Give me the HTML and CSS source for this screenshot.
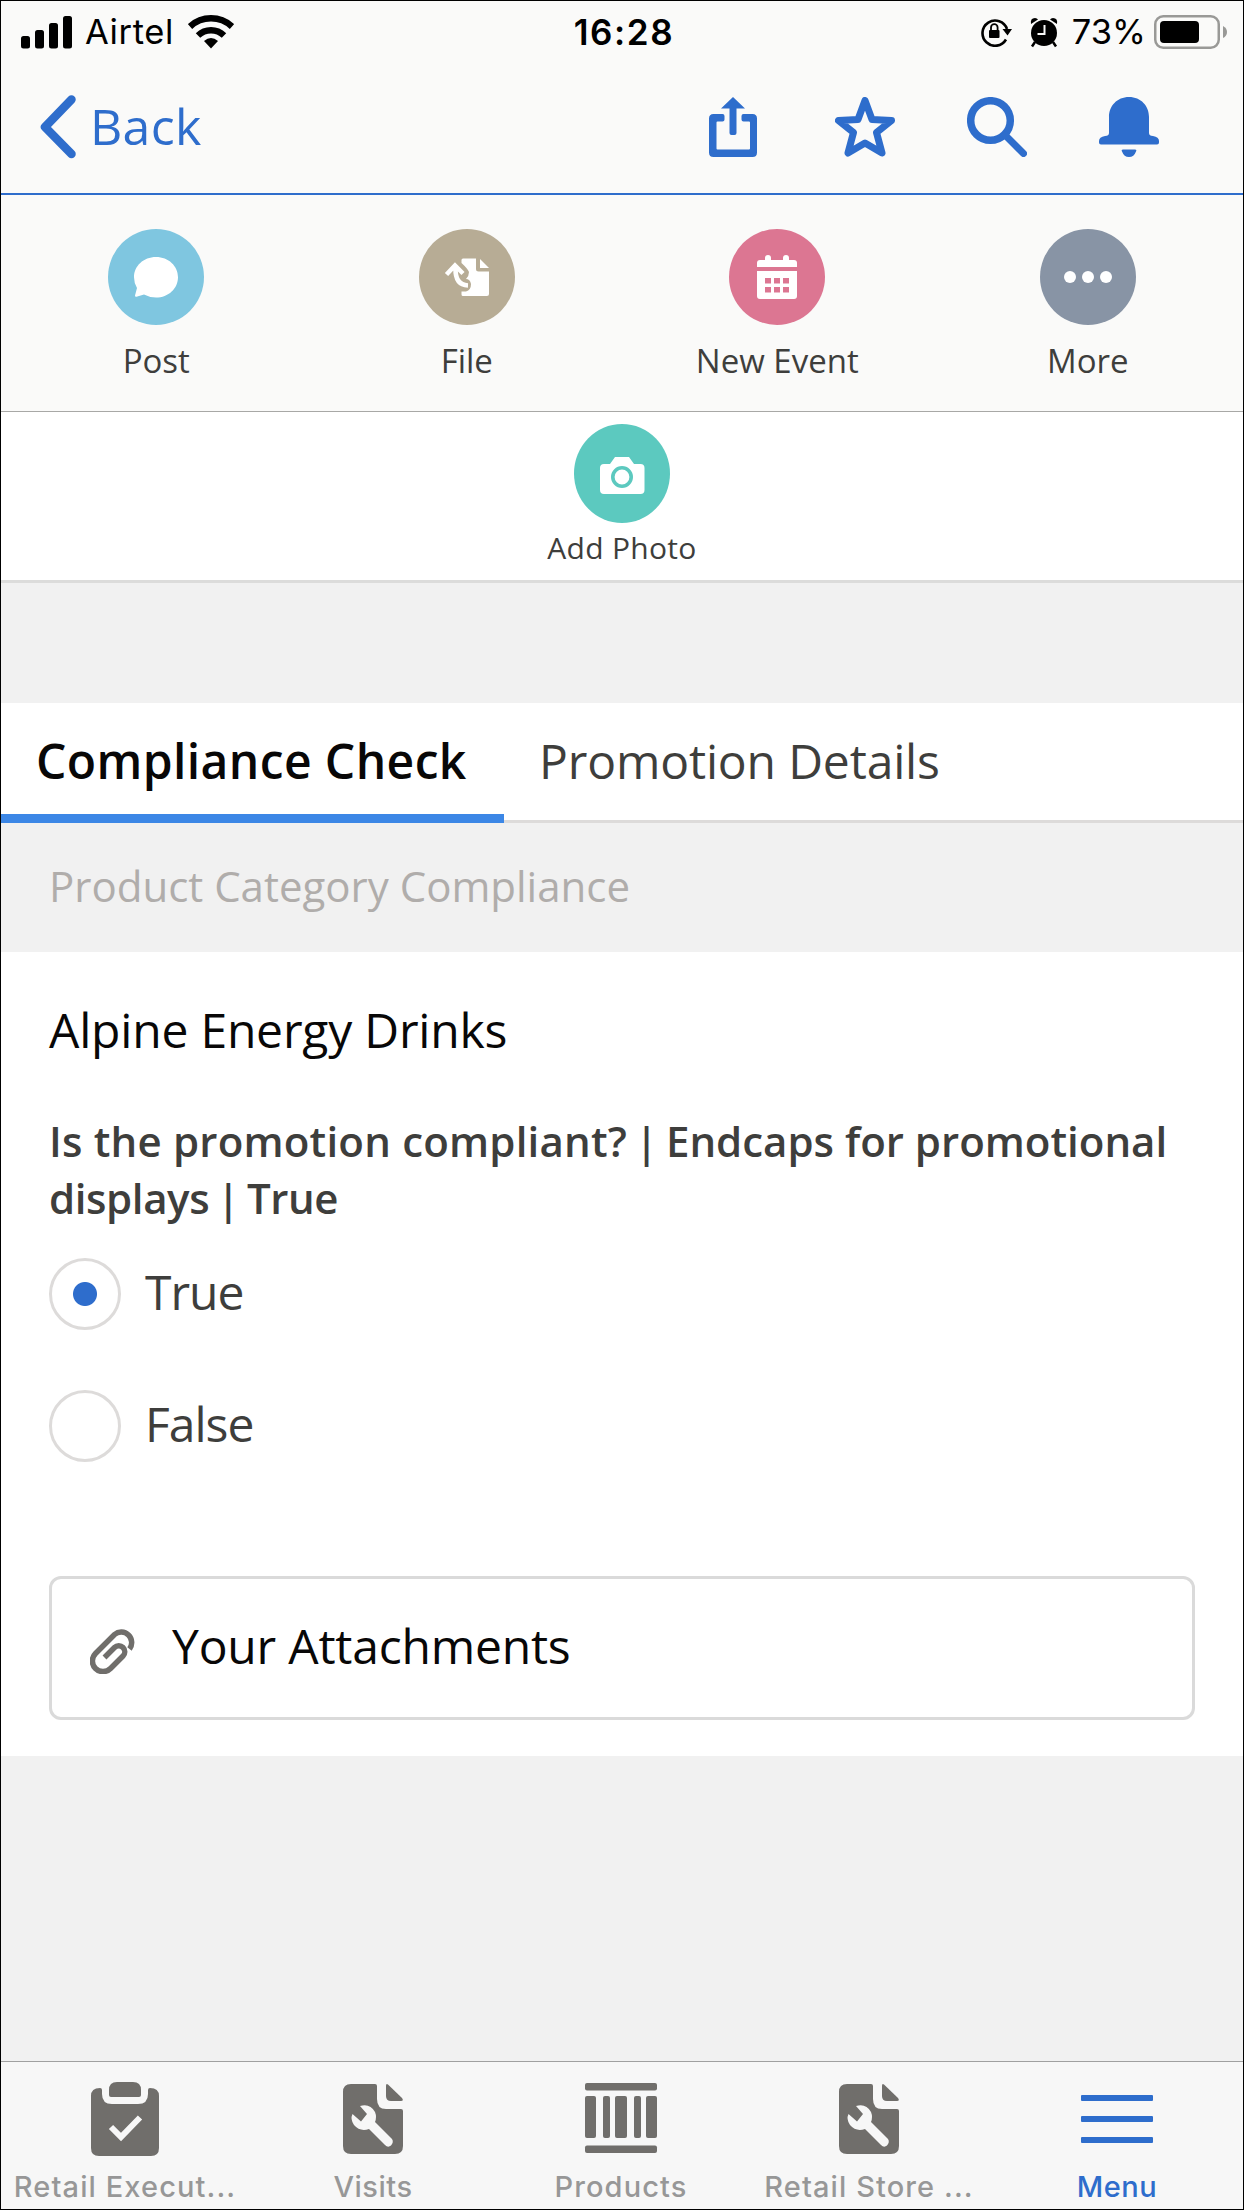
FILE: index.html
```html
<!DOCTYPE html>
<html lang="en">
<head>
    <meta charset="UTF-8">
    <meta name="viewport" content="width=device-width, initial-scale=1.0">
    <title>Compliance Check</title>
    <link rel="stylesheet" href="styles.css">
</head>
<body>
<div class="phone">
    <div class="status">
        <div class="status-left">
            <svg class="signal" width="51" height="33" viewBox="0 0 51 33">
                <rect x="0" y="20" width="9" height="12.5" rx="2.5"/>
                <rect x="14" y="14" width="9" height="18.5" rx="2.5"/>
                <rect x="28" y="7" width="9" height="25.5" rx="2.5"/>
                <rect x="42" y="0" width="9" height="32.5" rx="2.5"/>
            </svg>
            <span class="carrier">Airtel</span>
            <svg class="wifi" width="46" height="34" viewBox="0 0 46 34">
                <path d="M2 11.500A31 31 0 0 1 44 11.500" fill="none" stroke="#000" stroke-width="6.500"/>
                <path d="M10 20.500A19 19 0 0 1 36 20.500" fill="none" stroke="#000" stroke-width="6.500"/>
                <path d="M16 26Q23 20 30 26L23 33.500Z"/>
            </svg>
        </div>
        <span class="time">16:28</span>
        <div class="status-right">
            <svg class="lock" width="33" height="30" viewBox="0 0 33 30">
                <path d="M26 22.500A12.600 12.600 0 1 1 27 12" fill="none" stroke="#000" stroke-width="2.600"/>
                <path d="M22.500 12H32L27.500 18.500Z"/>
                <rect x="9" y="13" width="10.500" height="8" rx="1"/>
                <path d="M11 14V10.500a3.300 3.300 0 0 1 6.600 0V14" fill="none" stroke="#000" stroke-width="1.800"/>
            </svg>
            <svg class="alarm" width="28" height="31" viewBox="0 0 28 31">
                <circle cx="14" cy="16" r="13"/>
                <path d="M1 7Q0 1 5 1Q7 1 8 2.500ZM27 7Q28 1 23 1Q21 1 20 2.500Z"/>
                <path d="M5 25L2 29.500M23 25L26 29.500" stroke="#000" stroke-width="2.500"/>
                <path d="M14.500 8V17H7.500" fill="none" stroke="#fafaf9" stroke-width="2"/>
            </svg>
            <span class="percent">73%</span>
            <svg class="battery" width="73" height="34" viewBox="0 0 73 34">
                <rect x="1.250" y="1.250" width="63.500" height="31.500" rx="8" fill="none" stroke="#999997" stroke-width="2.500"/>
                <rect x="6" y="6" width="39" height="22" rx="4"/>
                <path d="M69 11Q73 13 73 17Q73 21 69 23Z" fill="#999997"/>
            </svg>
        </div>
    </div>

    <div class="navbar">
        <a class="back" href="#">
            <svg width="36" height="64" viewBox="0 0 36 64">
                <path d="M31.500 4.500L5 32L31.500 59" fill="none" stroke="#2e6dcc" stroke-width="8.500" stroke-linecap="round" stroke-linejoin="round"/>
            </svg>
            <span>Back</span>
        </a>
        <div class="nav-icons">
            <svg width="60" height="60" viewBox="0 0 60 60">
                <path d="M30 0L42 11.500H33.500V36Q33.500 38 31.500 38H28.500Q26.500 38 26.500 36V11.500H18Z"/>
                <path d="M19.500 24.500H14.500Q13.500 24.500 13.500 25.500V51.500Q13.500 52.500 14.500 52.500H46Q47 52.500 47 51.500V25.500Q47 24.500 46 24.500H40.500Q38.500 24.500 38.500 22.500V19Q38.500 17 40.500 17H49.500Q54 17 54 21.500V55.500Q54 60 49.500 60H10.500Q6 60 6 55.500V21.500Q6 17 10.500 17H19.500Q21.500 17 21.500 19V22.500Q21.500 24.500 19.500 24.500Z"/>
            </svg>
            <svg width="60" height="60" viewBox="0 0 60 60">
                <path d="M30 3.500L37 22.500L56.500 23.500L41.500 35.500L47 56L30 46L13 56L18.500 35.500L3.500 23.500L23 22.500Z" fill="none" stroke="#2e6dcc" stroke-width="7" stroke-linejoin="round"/>
            </svg>
            <svg width="60" height="60" viewBox="0 0 60 60">
                <circle cx="23.500" cy="23.500" r="19.800" fill="none" stroke="#2e6dcc" stroke-width="7.500"/>
                <path d="M38 38L56.500 56.500" stroke="#2e6dcc" stroke-width="7" stroke-linecap="round"/>
            </svg>
            <svg width="60" height="60" viewBox="0 0 60 60">
                <path d="M30 0C18 0 10 9 10 20V36Q10 39 6 39Q0 40 0 44V45.500Q0 47.500 2 47.500H58Q60 47.500 60 45.500V44Q60 40 54 39Q50 39 50 36V20C50 9 42 0 30 0Z"/>
                <path d="M24 52.500H36Q38 52.500 37 54.500Q35 60 30 60Q25 60 23 54.500Q22 52.500 24 52.500Z"/>
            </svg>
        </div>
    </div>

    <div class="actions">
        <div class="action">
            <span class="circle post">
                <svg width="96" height="96" viewBox="0 0 96 96">
                    <path d="M48 28C60.500 28 70 37 70 48.200S60.500 68.500 48 68.500Q41.500 68.500 36 65.500L28.500 67.800Q26.800 68 27 66.500L29 59Q26 54 26 48.200C26 37 35.500 28 48 28Z"/>
                </svg>
            </span>
            <span class="label">Post</span>
        </div>
        <div class="action">
            <span class="circle file">
                <svg width="96" height="96" viewBox="0 0 96 96">
                    <path d="M44 29.500H57V40Q57 42.500 59.500 42.500H70V65Q70 67 68 67H44Q42.500 67 42.500 65.500V62.500H47Q52 61 52 55Q51 50 47 50Q50 47 50 43Q49 40 42.500 34V31Q42.500 29.500 44 29.500Z"/>
                    <path d="M61 30L70 39H61Z"/>
                    <path d="M27.500 45.500L36 36.500L44 44.500M36.500 39Q36 56 49 56.500" fill="none" stroke="#fff" stroke-width="4.500"/>
                </svg>
            </span>
            <span class="label">File</span>
        </div>
        <div class="action">
            <span class="circle event">
                <svg width="96" height="96" viewBox="0 0 96 96">
                    <rect x="36" y="26" width="6" height="10" rx="3"/>
                    <rect x="54" y="26" width="6" height="10" rx="3"/>
                    <path d="M31 31H65Q68 31 68 34V38H28V34Q28 31 31 31Z"/>
                    <path fill-rule="evenodd" d="M28 42H68V67Q68 70 65 70H31Q28 70 28 67ZM36 49V54.500H42V49ZM45 49V54.500H51V49ZM54 49V54.500H60V49ZM36 58V63.500H42V58ZM45 58V63.500H51V58ZM54 58V63.500H60V58Z"/>
                </svg>
            </span>
            <span class="label">New Event</span>
        </div>
        <div class="action">
            <span class="circle more">
                <svg width="96" height="96" viewBox="0 0 96 96">
                    <circle cx="30" cy="48" r="6"/>
                    <circle cx="48" cy="48" r="6"/>
                    <circle cx="66" cy="48" r="6"/>
                </svg>
            </span>
            <span class="label">More</span>
        </div>
    </div>

    <div class="photo">
        <span class="circle camera">
            <svg width="96" height="99" viewBox="0 0 96 99">
                <path d="M41 33H55L60 40H66.500Q70.500 40 70.500 44V66Q70.500 70 66.500 70H30Q26 70 26 66V44Q26 40 30 40H36Z"/>
                <circle cx="48" cy="53" r="9.200" fill="none" stroke="#5cc9bf" stroke-width="3.600"/>
            </svg>
        </span>
        <span class="photo-label">Add Photo</span>
    </div>

    <div class="gap"></div>

    <div class="tabs">
        <a class="tab active">Compliance Check</a>
        <a class="tab">Promotion Details</a>
    </div>
    <div class="section">Product Category Compliance</div>

    <div class="panel">
        <div class="product">Alpine Energy Drinks</div>
        <div class="question">
            <span class="wide">Is the promotion compliant?</span> <span class="pipe">|</span> Endcaps for promotional
            <span class="tight">displays <span class="pipe">|</span> True</span>
        </div>
        <label class="option"><i class="radio checked"></i><span>True</span></label>
        <label class="option"><i class="radio"></i><span>False</span></label>
        <div class="attachments">
            <svg width="45" height="45" viewBox="0 0 45 45">
                <path d="M39.500 20A10.500 10.500 0 0 0 24.500 5.500L5.500 24.500A10.600 10.600 0 0 0 20.500 39.500L33 27A6 6 0 0 0 24.500 18.500L14.500 28.500" fill="none" stroke="#706e6b" stroke-width="5.500"/>
            </svg>
            <span>Your Attachments</span>
        </div>
    </div>

    <div class="tabbar">
        <div class="item">
            <svg width="76" height="76" viewBox="0 0 76 76">
                <path d="M30 1H46Q54 1 54 9V14Q54 16 52 16H24Q22 16 22 14V9Q22 1 30 1Z"/>
                <path d="M13 7Q15 7 15 9V13Q15 23 25 23H51Q61 23 61 13V9Q61 7 63 7Q72 7 72 15V67Q72 75 64 75H12Q4 75 4 67V15Q4 7 13 7Z"/>
                <path d="M24 46L34 56L53 36.500" fill="none" stroke="#f7f7f7" stroke-width="6"/>
            </svg>
            <span class="item-label">Retail Execut...</span>
        </div>
        <div class="item">
            <svg width="76" height="76" viewBox="0 0 76 76">
                <path d="M16 3H40Q42 3 42 5V18Q42 28 51 28H66Q68 28 68 30V65Q68 73 60 73H16Q8 73 8 65V11Q8 3 16 3Z"/>
                <path d="M51 5Q51 2 53 3.500L67 17Q69 20 66 20H56Q51 20 51 15Z"/>
                <path d="M25 25Q35 22 40 31Q42 36 40 41L57 58Q59 61 56 64.500Q53 67 50 64L34 48Q25 51 19 44Q15 38 17.500 33L26 40.500L32 33Z" fill="#f7f7f7"/>
            </svg>
            <span class="item-label short">Visits</span>
        </div>
        <div class="item">
            <svg width="76" height="76" viewBox="0 0 76 76">
                <rect x="2" y="2" width="72" height="7.500" rx="2"/>
                <rect x="2" y="15" width="11" height="42" rx="2"/>
                <rect x="20" y="15" width="7" height="42" rx="2"/>
                <rect x="32" y="15" width="12" height="42" rx="2"/>
                <rect x="51" y="15" width="7" height="42" rx="2"/>
                <rect x="63" y="15" width="11" height="42" rx="2"/>
                <rect x="2" y="64.500" width="72" height="7.500" rx="2"/>
            </svg>
            <span class="item-label">Products</span>
        </div>
        <div class="item">
            <svg width="76" height="76" viewBox="0 0 76 76">
                <path d="M16 3H40Q42 3 42 5V18Q42 28 51 28H66Q68 28 68 30V65Q68 73 60 73H16Q8 73 8 65V11Q8 3 16 3Z"/>
                <path d="M51 5Q51 2 53 3.500L67 17Q69 20 66 20H56Q51 20 51 15Z"/>
                <path d="M25 25Q35 22 40 31Q42 36 40 41L57 58Q59 61 56 64.500Q53 67 50 64L34 48Q25 51 19 44Q15 38 17.500 33L26 40.500L32 33Z" fill="#f7f7f7"/>
            </svg>
            <span class="item-label">Retail Store ...</span>
        </div>
        <div class="item current">
            <svg width="76" height="76" viewBox="0 0 76 76">
                <rect x="2" y="14" width="72" height="6" rx="1"/>
                <rect x="2" y="35" width="72" height="6" rx="1"/>
                <rect x="2" y="56" width="72" height="6" rx="1"/>
            </svg>
            <span class="item-label short">Menu</span>
        </div>
    </div>
</div>
</body>
</html>
```

FILE: styles.css
```css
* {
    margin: 0;
    padding: 0;
    box-sizing: border-box;
}

body {
    font-family: "Open Sans", "Noto Sans", sans-serif;
    color: #3e3e3c;
}

svg {
    display: block;
    flex: none;
}

span {
    white-space: nowrap;
}

.phone {
    width: 1244px;
    height: 2210px;
    border: 1px solid #000;
    background: #f1f1f1;
    display: flex;
    flex-direction: column;
}

.status {
    height: 62px;
    padding: 0 16px 0 20px;
    background: #fafaf9;
    color: #000;
    font-family: Inter, sans-serif;
    font-size: 34.5px;
    line-height: 62px;
    display: flex;
    align-items: center;
}

.status-left,
.status-right {
    flex: 1;
    display: flex;
    align-items: center;
}

.status-right {
    justify-content: flex-end;
}

.carrier {
    margin: 0 14px 0 13px;
    letter-spacing: 0.6px;
}

.time {
    font-size: 35px;
    font-weight: 600;
    letter-spacing: 1.6px;
}

.alarm {
    margin: 0 14px 0 17px;
}

.battery {
    margin-left: 8px;
}

.navbar {
    height: 132px;
    padding: 0 84px 2px 39px;
    background: #fafaf9;
    border-bottom: 2px solid #2e6dcc;
    display: flex;
    align-items: center;
    justify-content: space-between;
}

.back {
    display: flex;
    align-items: center;
    color: #2e6dcc;
    font-size: 50px;
    line-height: 60px;
    letter-spacing: 0.3px;
    text-decoration: none;
}

.back span {
    margin-left: 14px;
    padding-bottom: 2px;
}

.nav-icons {
    display: flex;
    gap: 72px;
    fill: #2e6dcc;
}

.actions {
    height: 217px;
    padding-top: 34px;
    background: #fafaf9;
    border-bottom: 1px solid #a8a8a6;
    display: grid;
    grid-template-columns: repeat(4, 1fr);
}

.action,
.photo {
    display: flex;
    flex-direction: column;
    align-items: center;
}

.circle {
    width: 96px;
    height: 96px;
    border-radius: 50%;
    fill: #fff;
}

.post {
    background: #7fc6e0;
}

.file {
    background: #b7ac95;
}

.event {
    background: #dc7692;
}

.more {
    background: #8894a5;
}

.camera {
    height: 99px;
    background: #5cc9bf;
}

.label {
    margin-top: 16px;
    font-size: 33px;
    line-height: 40px;
}

.photo {
    height: 171px;
    padding-top: 12px;
    background: #fff;
    border-bottom: 3px solid #dcdcdb;
}

.photo-label {
    margin-top: 7px;
    font-size: 30px;
    line-height: 36px;
    letter-spacing: 0.3px;
}

.gap {
    height: 120px;
}

.tabs {
    height: 120px;
    background: #fff;
    display: flex;
    font-size: 48px;
    line-height: 115px;
}

.tab {
    flex: 1;
    padding-left: 35px;
    border-bottom: 3px solid #dddbda;
    letter-spacing: -0.15px;
}

.active {
    flex: none;
    width: 503px;
    border-bottom: 9px solid #3c87e6;
    font-weight: 600;
    letter-spacing: 0.4px;
    color: #080707;
}

.section {
    height: 129px;
    padding-left: 48px;
    font-size: 42px;
    line-height: 125px;
    color: #b0adab;
}

.panel {
    padding: 48px 48px 36px;
    background: #fff;
}

.product {
    font-size: 48px;
    line-height: 60px;
    letter-spacing: -0.2px;
    color: #080707;
}

.question {
    margin: 52px 0 32px;
    font-size: 42px;
    font-weight: 600;
    line-height: 57px;
}

.wide {
    letter-spacing: 0.2px;
}

.tight {
    letter-spacing: -0.4px;
}

.pipe {
    margin: 0 -3px;
}

.option {
    height: 72px;
    margin-bottom: 60px;
    display: flex;
    align-items: center;
    font-size: 48px;
    line-height: 60px;
    letter-spacing: -1px;
}

.option span {
    margin-left: 24px;
    padding-bottom: 5px;
}

.radio {
    width: 72px;
    height: 72px;
    border: 3px solid #dddbda;
    border-radius: 50%;
}

.checked {
    background: radial-gradient(circle, #2e6dcc 11.500px, #fff 12.500px);
}

.attachments {
    height: 144px;
    margin-top: 114px;
    padding-left: 38px;
    border: 3px solid #dadada;
    border-radius: 12px;
    display: flex;
    align-items: center;
    font-size: 48px;
    line-height: 60px;
    letter-spacing: -0.2px;
    color: #080707;
}

.attachments svg {
    margin-top: 6px;
}

.attachments span {
    margin-left: 37px;
    padding-bottom: 5px;
}

.tabbar {
    height: 148px;
    margin-top: auto;
    padding: 19px 2px 0 0;
    background: #f7f7f7;
    border-top: 1px solid #a0a0a0;
    display: grid;
    grid-template-columns: repeat(5, 1fr);
}

.item {
    display: flex;
    flex-direction: column;
    align-items: center;
    fill: #706e6b;
    color: #979797;
    font-family: Inter, sans-serif;
}

.item-label {
    margin-top: 12px;
    font-size: 29px;
    font-weight: 500;
    line-height: 36px;
    letter-spacing: 1.1px;
}

.short {
    letter-spacing: 0.5px;
}

.current {
    fill: #2e6dcc;
    color: #2e6dcc;
}
```
